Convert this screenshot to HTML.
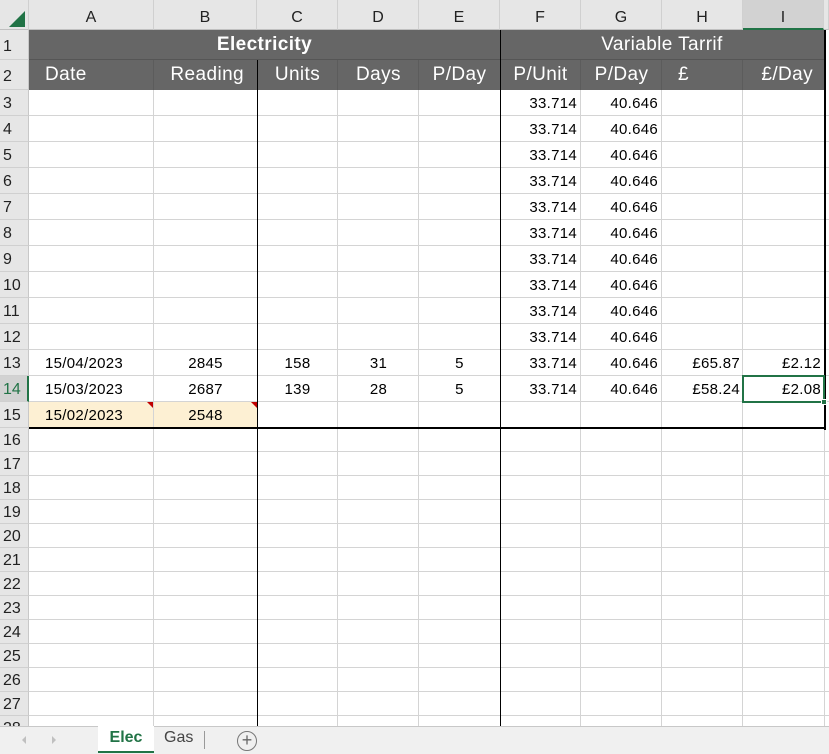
<!DOCTYPE html>
<html><head><meta charset="utf-8"><style>
*{margin:0;padding:0;box-sizing:border-box}
body{width:829px;height:754px;overflow:hidden;background:#fff;font-family:"Liberation Sans",Calibri,sans-serif;position:relative}
div{position:absolute}
.v{width:1px;background:#d4d4d4}
.h{height:1px;background:#d4d4d4}
.t{font-size:15px;letter-spacing:0.3px;color:#000;line-height:28px;height:26px;white-space:nowrap}
.rh{left:0;width:29px;background:#e6e6e6;font-size:16px;color:#222;padding-left:3px;border-bottom:1px solid #d0d0d0;border-right:1px solid #c8c8c8}
.ch{top:0;height:30px;background:#e6e6e6;font-size:16px;color:#222;text-align:center;line-height:36px;border-right:1px solid #d0d0d0;border-bottom:1px solid #c0c0c0}
.w{color:#fff;font-size:19px;letter-spacing:0.4px;line-height:30px;height:30px;white-space:nowrap}
.r{text-align:right}.c{text-align:center}
</style></head><body>
<div class="ch" style="left:0;width:29px"></div>
<div style="left:9px;top:11px;width:0;height:0;border-left:16px solid transparent;border-bottom:16px solid #217346"></div>
<div class="ch" style="left:29px;width:125px">A</div>
<div class="ch" style="left:154px;width:103px">B</div>
<div class="ch" style="left:257px;width:81px">C</div>
<div class="ch" style="left:338px;width:81px">D</div>
<div class="ch" style="left:419px;width:81px">E</div>
<div class="ch" style="left:500px;width:81px">F</div>
<div class="ch" style="left:581px;width:81px">G</div>
<div class="ch" style="left:662px;width:81px">H</div>
<div class="ch" style="left:743px;width:81px;background:#d2d2d2;border-bottom:2px solid #217346">I</div>
<div class="ch" style="left:824px;width:5px"></div>

<div class="rh" style="top:30px;height:30px;line-height:34px">1</div>
<div class="rh" style="top:60px;height:30px;line-height:34px">2</div>
<div class="rh" style="top:90px;height:26px;line-height:28px">3</div>
<div class="rh" style="top:116px;height:26px;line-height:28px">4</div>
<div class="rh" style="top:142px;height:26px;line-height:28px">5</div>
<div class="rh" style="top:168px;height:26px;line-height:28px">6</div>
<div class="rh" style="top:194px;height:26px;line-height:28px">7</div>
<div class="rh" style="top:220px;height:26px;line-height:28px">8</div>
<div class="rh" style="top:246px;height:26px;line-height:28px">9</div>
<div class="rh" style="top:272px;height:26px;line-height:28px">10</div>
<div class="rh" style="top:298px;height:26px;line-height:28px">11</div>
<div class="rh" style="top:324px;height:26px;line-height:28px">12</div>
<div class="rh" style="top:350px;height:26px;line-height:28px">13</div>
<div class="rh" style="top:376px;height:26px;line-height:28px;background:#d2d2d2;color:#217346;border-right:2px solid #217346">14</div>
<div class="rh" style="top:402px;height:26px;line-height:28px">15</div>
<div class="rh" style="top:428px;height:24px;line-height:26px">16</div>
<div class="rh" style="top:452px;height:24px;line-height:26px">17</div>
<div class="rh" style="top:476px;height:24px;line-height:26px">18</div>
<div class="rh" style="top:500px;height:24px;line-height:26px">19</div>
<div class="rh" style="top:524px;height:24px;line-height:26px">20</div>
<div class="rh" style="top:548px;height:24px;line-height:26px">21</div>
<div class="rh" style="top:572px;height:24px;line-height:26px">22</div>
<div class="rh" style="top:596px;height:24px;line-height:26px">23</div>
<div class="rh" style="top:620px;height:24px;line-height:26px">24</div>
<div class="rh" style="top:644px;height:24px;line-height:26px">25</div>
<div class="rh" style="top:668px;height:24px;line-height:26px">26</div>
<div class="rh" style="top:692px;height:24px;line-height:26px">27</div>
<div class="rh" style="top:716px;height:24px;line-height:26px">28</div>

<div class="v" style="left:153px;top:30px;height:696px"></div>
<div class="v" style="left:337px;top:30px;height:696px"></div>
<div class="v" style="left:418px;top:30px;height:696px"></div>
<div class="v" style="left:580px;top:30px;height:696px"></div>
<div class="v" style="left:661px;top:30px;height:696px"></div>
<div class="v" style="left:742px;top:30px;height:696px"></div>
<div class="v" style="left:824px;top:428px;height:298px"></div>
<div class="h" style="left:29px;width:800px;top:115px"></div>
<div class="h" style="left:29px;width:800px;top:141px"></div>
<div class="h" style="left:29px;width:800px;top:167px"></div>
<div class="h" style="left:29px;width:800px;top:193px"></div>
<div class="h" style="left:29px;width:800px;top:219px"></div>
<div class="h" style="left:29px;width:800px;top:245px"></div>
<div class="h" style="left:29px;width:800px;top:271px"></div>
<div class="h" style="left:29px;width:800px;top:297px"></div>
<div class="h" style="left:29px;width:800px;top:323px"></div>
<div class="h" style="left:29px;width:800px;top:349px"></div>
<div class="h" style="left:29px;width:800px;top:375px"></div>
<div class="h" style="left:29px;width:800px;top:401px"></div>
<div class="h" style="left:29px;width:800px;top:451px"></div>
<div class="h" style="left:29px;width:800px;top:475px"></div>
<div class="h" style="left:29px;width:800px;top:499px"></div>
<div class="h" style="left:29px;width:800px;top:523px"></div>
<div class="h" style="left:29px;width:800px;top:547px"></div>
<div class="h" style="left:29px;width:800px;top:571px"></div>
<div class="h" style="left:29px;width:800px;top:595px"></div>
<div class="h" style="left:29px;width:800px;top:619px"></div>
<div class="h" style="left:29px;width:800px;top:643px"></div>
<div class="h" style="left:29px;width:800px;top:667px"></div>
<div class="h" style="left:29px;width:800px;top:691px"></div>
<div class="h" style="left:29px;width:800px;top:715px"></div>

<div style="left:29px;top:402px;width:124px;height:26px;background:#fdf0d3"></div>
<div style="left:154px;top:402px;width:103px;height:26px;background:#fdf0d3"></div>
<div style="left:147px;top:402px;width:0;height:0;border-left:6px solid transparent;border-top:6px solid #c00000"></div>
<div style="left:251px;top:402px;width:0;height:0;border-left:6px solid transparent;border-top:6px solid #c00000"></div>

<div style="left:29px;top:30px;width:795px;height:60px;background:#666"></div>
<div style="left:29px;top:59px;width:795px;height:1px;background:#555"></div>
<div style="left:153px;top:60px;width:1px;height:30px;background:#5c5c5c"></div>
<div style="left:337px;top:60px;width:1px;height:30px;background:#5c5c5c"></div>
<div style="left:418px;top:60px;width:1px;height:30px;background:#5c5c5c"></div>
<div style="left:580px;top:60px;width:1px;height:30px;background:#5c5c5c"></div>
<div style="left:661px;top:60px;width:1px;height:30px;background:#5c5c5c"></div>
<div style="left:742px;top:60px;width:1px;height:30px;background:#5c5c5c"></div>
<div class="w c" style="left:29px;top:30px;width:471px;font-weight:bold">Electricity</div>
<div class="w c" style="left:500px;top:30px;width:324px">Variable Tarrif</div>
<div class="w" style="left:45px;top:60px">Date</div>
<div class="w r" style="left:150px;top:60px;width:94px">Reading</div>
<div class="w c" style="left:257px;top:60px;width:81px">Units</div>
<div class="w c" style="left:338px;top:60px;width:81px">Days</div>
<div class="w c" style="left:419px;top:60px;width:81px">P/Day</div>
<div class="w c" style="left:500px;top:60px;width:81px">P/Unit</div>
<div class="w c" style="left:581px;top:60px;width:81px">P/Day</div>
<div class="w" style="left:678px;top:60px">£</div>
<div class="w r" style="left:733px;top:60px;width:80px">£/Day</div>

<div style="left:257px;top:60px;width:1px;height:666px;background:#000"></div>
<div style="left:500px;top:30px;width:1px;height:696px;background:#000"></div>
<div style="left:824px;top:30px;width:2px;height:400px;background:#000"></div>
<div style="left:29px;top:427px;width:797px;height:2px;background:#000"></div>

<div class="t r" style="left:490px;top:90px;width:87px">33.714</div><div class="t r" style="left:571px;top:90px;width:87px">40.646</div>
<div class="t r" style="left:490px;top:116px;width:87px">33.714</div><div class="t r" style="left:571px;top:116px;width:87px">40.646</div>
<div class="t r" style="left:490px;top:142px;width:87px">33.714</div><div class="t r" style="left:571px;top:142px;width:87px">40.646</div>
<div class="t r" style="left:490px;top:168px;width:87px">33.714</div><div class="t r" style="left:571px;top:168px;width:87px">40.646</div>
<div class="t r" style="left:490px;top:194px;width:87px">33.714</div><div class="t r" style="left:571px;top:194px;width:87px">40.646</div>
<div class="t r" style="left:490px;top:220px;width:87px">33.714</div><div class="t r" style="left:571px;top:220px;width:87px">40.646</div>
<div class="t r" style="left:490px;top:246px;width:87px">33.714</div><div class="t r" style="left:571px;top:246px;width:87px">40.646</div>
<div class="t r" style="left:490px;top:272px;width:87px">33.714</div><div class="t r" style="left:571px;top:272px;width:87px">40.646</div>
<div class="t r" style="left:490px;top:298px;width:87px">33.714</div><div class="t r" style="left:571px;top:298px;width:87px">40.646</div>
<div class="t r" style="left:490px;top:324px;width:87px">33.714</div><div class="t r" style="left:571px;top:324px;width:87px">40.646</div>
<div class="t r" style="left:490px;top:350px;width:87px">33.714</div><div class="t r" style="left:571px;top:350px;width:87px">40.646</div>
<div class="t r" style="left:490px;top:376px;width:87px">33.714</div><div class="t r" style="left:571px;top:376px;width:87px">40.646</div>

<div class="t" style="left:45px;top:350px">15/04/2023</div>
<div class="t c" style="left:154px;top:350px;width:103px">2845</div>
<div class="t c" style="left:257px;top:350px;width:81px">158</div>
<div class="t c" style="left:338px;top:350px;width:81px">31</div>
<div class="t c" style="left:419px;top:350px;width:81px">5</div>
<div class="t r" style="left:652px;top:350px;width:88px">£65.87</div>
<div class="t r" style="left:733px;top:350px;width:88px">£2.12</div>
<div class="t" style="left:45px;top:376px">15/03/2023</div>
<div class="t c" style="left:154px;top:376px;width:103px">2687</div>
<div class="t c" style="left:257px;top:376px;width:81px">139</div>
<div class="t c" style="left:338px;top:376px;width:81px">28</div>
<div class="t c" style="left:419px;top:376px;width:81px">5</div>
<div class="t r" style="left:652px;top:376px;width:88px">£58.24</div>
<div class="t r" style="left:733px;top:376px;width:88px">£2.08</div>
<div class="t" style="left:45px;top:402px">15/02/2023</div>
<div class="t c" style="left:154px;top:402px;width:103px">2548</div>

<div style="left:742px;top:375px;width:83px;height:28px;border:2px solid #217346"></div>
<div style="left:821px;top:399px;width:6px;height:6px;background:#217346;border:1px solid #fff"></div>

<div style="left:0;top:726px;width:829px;height:28px;background:#f0f0f0;border-top:1px solid #c8c8c8"></div>
<div style="left:22px;top:736px;width:0;height:0;border-top:4px solid transparent;border-bottom:4px solid transparent;border-right:4px solid #c0c0c0"></div>
<div style="left:52px;top:736px;width:0;height:0;border-top:4px solid transparent;border-bottom:4px solid transparent;border-left:4px solid #c0c0c0"></div>
<div style="left:98px;top:726px;width:56px;height:27px;background:#fff;border-bottom:2px solid #217346;color:#217346;font-weight:bold;font-size:16px;text-align:center;line-height:23px">Elec</div>
<div style="left:164px;top:726px;font-size:16px;color:#444;line-height:23px">Gas</div>
<div style="left:204px;top:731px;width:1px;height:18px;background:#999"></div>
<div style="left:237px;top:731px;width:20px;height:20px;border:1px solid #777;border-radius:50%;color:#666;font-size:18px;line-height:17px;text-align:center">+</div>
</body></html>
